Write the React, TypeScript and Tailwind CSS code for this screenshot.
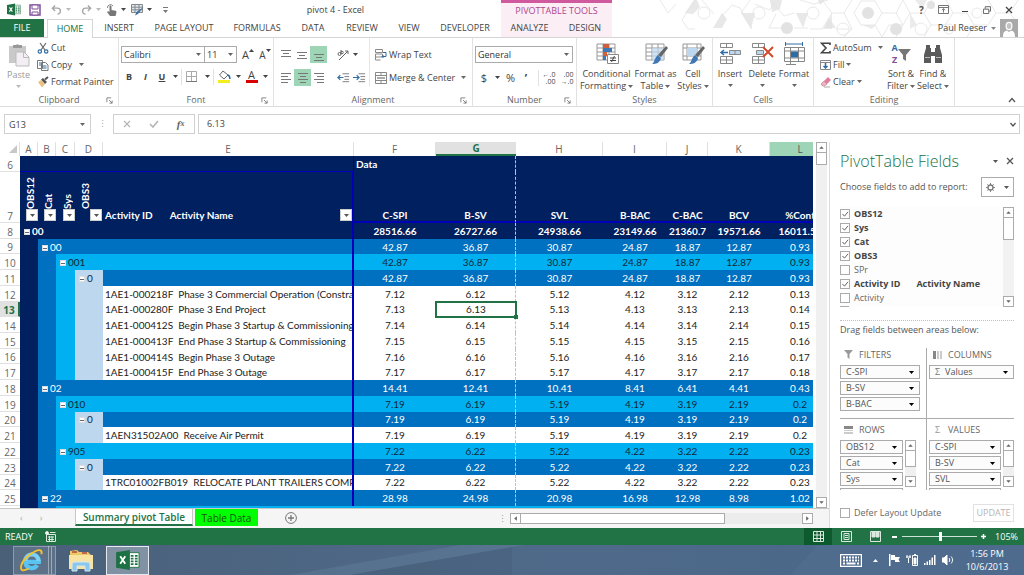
import type { ReactNode } from 'react'
import clsx from 'clsx'

type RowKind = 'total' | 'mid' | 'light' | 'sub' | 'item'

interface SheetRow {
  n: number
  kind: RowKind
  label: string
  values: string[]
}

const row = (n: number, kind: RowKind, label: string, values: string): SheetRow => ({
  n,
  kind,
  label,
  values: values.split(' '),
})

const rows: SheetRow[] = [
  row(8, 'total', '00', '28516.66 26727.66 24938.66 23149.66 21360.7 19571.66 16011.54'),
  row(9, 'mid', '00', '42.87 36.87 30.87 24.87 18.87 12.87 0.93'),
  row(10, 'light', '001', '42.87 36.87 30.87 24.87 18.87 12.87 0.93'),
  row(11, 'sub', '0', '42.87 36.87 30.87 24.87 18.87 12.87 0.93'),
  row(12, 'item', '1AE1-000218F  Phase 3 Commercial Operation (Constraint)', '7.12 6.12 5.12 4.12 3.12 2.12 0.13'),
  row(13, 'item', '1AE1-000280F  Phase 3 End Project', '7.13 6.13 5.13 4.13 3.13 2.13 0.14'),
  row(14, 'item', '1AE1-000412S  Begin Phase 3 Startup & Commissioning', '7.14 6.14 5.14 4.14 3.14 2.14 0.15'),
  row(15, 'item', '1AE1-000413F  End Phase 3 Startup & Commissioning', '7.15 6.15 5.15 4.15 3.15 2.15 0.16'),
  row(16, 'item', '1AE1-000414S  Begin Phase 3 Outage', '7.16 6.16 5.16 4.16 3.16 2.16 0.17'),
  row(17, 'item', '1AE1-000415F  End Phase 3 Outage', '7.17 6.17 5.17 4.17 3.17 2.17 0.18'),
  row(18, 'mid', '02', '14.41 12.41 10.41 8.41 6.41 4.41 0.43'),
  row(19, 'light', '010', '7.19 6.19 5.19 4.19 3.19 2.19 0.2'),
  row(20, 'sub', '0', '7.19 6.19 5.19 4.19 3.19 2.19 0.2'),
  row(21, 'item', '1AEN31502A00  Receive Air Permit', '7.19 6.19 5.19 4.19 3.19 2.19 0.2'),
  row(22, 'light', '905', '7.22 6.22 5.22 4.22 3.22 2.22 0.23'),
  row(23, 'sub', '0', '7.22 6.22 5.22 4.22 3.22 2.22 0.23'),
  row(24, 'item', '1TRC01002FB019  RELOCATE PLANT TRAILERS COMPLETE', '7.22 6.22 5.22 4.22 3.22 2.22 0.23'),
  row(25, 'mid', '22', '28.98 24.98 20.98 16.98 12.98 8.98 1.02'),
]

const kindDepth: Record<RowKind, number> = { total: 0, mid: 1, light: 2, sub: 3, item: 4 }

const kindFill: Record<RowKind, string> = {
  total: 'bg-[#002060] text-white font-bold',
  mid: 'bg-[#0070c0] text-white',
  light: 'bg-[#00b0f0] text-[#10283c]',
  sub: 'bg-[#0070c0] text-white',
  item: 'bg-white text-[#222]',
}

const levelFill = ['bg-[#002060]', 'bg-[#0070c0]', 'bg-[#00b0f0]', 'bg-[#bdd7ee]']

const valueHeads = ['C-SPI', 'B-SV', 'SVL', 'B-BAC', 'C-BAC', 'BCV', '%Cont']

const fields = [
  { name: 'OBS12', on: true },
  { name: 'Sys', on: true },
  { name: 'Cat', on: true },
  { name: 'OBS3', on: true },
  { name: 'SPr', on: false },
  { name: 'Activity ID', extra: 'Activity Name', on: true },
  { name: 'Activity', on: false },
]

/* Small shared pieces */

function Caret({ className = '' }: { className?: string }) {
  return (
    <svg viewBox="0 0 5 3" className={clsx('h-[3px] w-[5px] shrink-0', className)} aria-hidden="true">
      <path d="M0 0h5L2.500 3z" fill="currentColor" />
    </svg>
  )
}

function IconButton({ label, className, children }: { label: string; className?: string; children: ReactNode }) {
  return (
    <button type="button" aria-label={label} className={clsx('flex h-[17px] shrink-0 items-center justify-center', className)}>
      {children}
    </button>
  )
}

function Divider() {
  return <div className="h-4 w-px shrink-0 bg-[#e1e1e1]" />
}

function Group({ label, launcher, className, children }: { label: string; launcher?: boolean; className: string; children: ReactNode }) {
  return (
    <section className={clsx('flex shrink-0 flex-col border-r border-[#e1e1e1]', className)}>
      <div className="h-[57px]">{children}</div>
      <div className="flex h-3 items-center">
        <span className="flex-1 text-center leading-3 text-[#666]">{label}</span>
        {launcher && (
          <button type="button" aria-label={`${label} settings`} className="-ml-3 mr-1 w-2">
            <svg viewBox="0 0 8 8" className="size-[7px]" fill="none" stroke="#777">
              <path d="M1 6V1h5M3.500 3.500L7 7M7 4v3H4" />
            </svg>
          </button>
        )}
      </div>
    </section>
  )
}

function BigButton({ label, lines, caretBelow, className, children }: { label: string; lines: string[]; caretBelow?: boolean; className: string; children: ReactNode }) {
  return (
    <button type="button" aria-label={label} className={clsx('flex shrink-0 flex-col items-center pt-1', className)}>
      <span className="mb-[2px] flex h-6 items-center">{children}</span>
      {lines.map((line, i) => (
        <span key={line} className="flex items-center gap-[2px] whitespace-nowrap leading-3">
          {line}
          {!caretBelow && i === lines.length - 1 && <Caret className="text-[#666]" />}
        </span>
      ))}
      {caretBelow && <Caret className="mt-1 text-[#666]" />}
    </button>
  )
}

function Lines({ rows: r, x = [2, 2, 2, 2] }: { rows: number[]; x?: number[] }) {
  return (
    <svg viewBox="0 0 14 14" className="size-[14px]" stroke="#777" fill="none" aria-hidden="true">
      {r.map((y, i) => (
        <path key={y} d={`M${x[i] < 0 ? 2 : x[i]} ${y + 0.5}H${x[i] < 0 ? 9 : x[i] === 4 ? 10 : 12}`} />
      ))}
    </svg>
  )
}

function Select({ label, value, className }: { label: string; value: string; className: string }) {
  return (
    <div className={clsx('relative h-[17px] border border-[#ababab]', className)}>
      <select aria-label={label} className="block size-full appearance-none bg-white pl-[2px] text-[#333] outline-none">
        <option>{value}</option>
      </select>
      <Caret className="pointer-events-none absolute right-[3px] top-[6px] text-[#666]" />
    </div>
  )
}

function ScrollButton({ dir }: { dir: 'up' | 'down' | 'left' | 'right' }) {
  const d = {
    up: 'M2.500 6.500h5L5 3.500z',
    down: 'M2.500 3.500h5L5 6.500z',
    left: 'M6.500 2.500v5L3.500 5z',
    right: 'M3.500 2.500v5L6.500 5z',
  }[dir]
  return (
    <button type="button" aria-label={`Scroll ${dir}`} className="size-[11px] shrink-0 border border-[#ababab] bg-white">
      <svg viewBox="0 0 10 10" className="size-full">
        <path d={d} fill="#666" />
      </svg>
    </button>
  )
}

function CheckField({ name, extra, on }: { name: string; extra?: string; on?: boolean }) {
  return (
    <label className={clsx('flex h-[14px] items-center gap-[4px]', on ? 'font-bold text-[#444]' : 'text-[#666]')}>
      <span className="grid size-[10px]">
        <input type="checkbox" defaultChecked={on} className="peer col-start-1 row-start-1 size-[10px] appearance-none border border-[#ababab] bg-white" />
        <svg viewBox="0 0 10 10" className="pointer-events-none invisible col-start-1 row-start-1 size-[10px] peer-checked:visible" fill="none" stroke="#666">
          <path d="M2.500 5l2 2.200L8 2.800" />
        </svg>
      </span>
      <span>{name}</span>
      {extra && <span className="ml-3">{extra}</span>}
    </label>
  )
}

/* Title bar and tabs */

function ExcelMark({ className }: { className: string }) {
  return (
    <svg viewBox="0 0 26 24" className={className} aria-hidden="true">
      <path d="M14 4h11v16H14z" fill="#fff" stroke="#217346" />
      <path d="M16 7.500h3M20.500 7.500h3M16 10.500h3M20.500 10.500h3M16 13.500h3M20.500 13.500h3M16 16.500h3M20.500 16.500h3" stroke="#217346" strokeWidth="2" />
      <path d="M0 3.500L15 1v22L0 20.500z" fill="#1e7145" />
      <path d="M4.500 8l5.500 8M10 8l-5.500 8" stroke="#fff" strokeWidth="2" />
    </svg>
  )
}

function HeaderPattern() {
  return (
    <svg viewBox="640 0 384 37" className="pointer-events-none absolute right-0 top-0 h-[37px] w-[384px]" aria-hidden="true">
      <g fill="none" stroke="#e9e9e9">
        <path d="M660 0l8 13 8-9M695 0l-13 20 6 9h7M702 0l12 14M722 16l10-11 8 3 12 21M741 13l9-13M755 4l14 6 10-10M770 0l14 16 10-3M776 14l-7 14h14M794 28h14M800 0l14 4 14-4" />
        <path d="M822 0l10 13-10 16h-12M832 13h12l8-13M844 13l8 16h-16M854 13l7-12h14l7 12-7 12h-14zM882 13h14l7-13M896 13l7 12-7 12M882 37l7-12h14l7-12M910 13l-7-13M910 13h14l7 12h14M924 13l8-13M931 25l-7 12M852 29l-8 8M875 25l7 12M945 25l8-12h14l7 12-7 12M953 13l-7-13M974 25h14l8-12-8-13M996 13h14l8 12M1010 13l8-13" />
        <circle cx="704" cy="13" r="6" />
        <circle cx="759" cy="13" r="6" />
        <circle cx="813" cy="13" r="6" />
        <circle cx="843" cy="29" r="6" />
        <circle cx="921" cy="29" r="6" />
        <circle cx="949" cy="29" r="5" />
        <circle cx="977" cy="13" r="5" />
      </g>
      <g fill="#e2e2e2">
        <path d="M694 0h3l3 7-7 7-8-1zM722 13l5 6-5 9h-9zM741 13h14l-4 16zM770 0h12l-2 9-8 3zM796 13h12l-5 15zM818 0h7l-5 5zM829 18l7 10h-12z" opacity=".8" />
        <path d="M832 13l-9 16h9zM862 25h14l-4 4zM910 13l7 12-7 4zM915 0h12l-5 9z" opacity=".7" />
        <circle cx="787" cy="28" r="6" />
        <circle cx="868" cy="13" r="6" />
        <circle cx="896" cy="29" r="6" />
        <circle cx="931" cy="5" r="4" />
      </g>
    </svg>
  )
}

function TitleBar() {
  return (
    <div className="relative flex h-[19px] items-stretch">
      <div className="flex w-[501px] items-center">
        <div className="flex w-[170px] shrink-0 items-center text-[#777]">
          <ExcelMark className="ml-[7px] h-[13px] w-[14px]" />
          <IconButton label="Save" className="ml-2 w-3">
            <svg viewBox="0 0 12 12" className="size-3">
              <path d="M1 1h10v10H1z" fill="#fff" stroke="#80519a" strokeWidth="1.500" />
              <path d="M3 1h6v4H3zM3 8h6v3H3z" fill="#fff" stroke="#80519a" />
            </svg>
          </IconButton>
          <IconButton label="Undo" className="ml-[10px] w-5 gap-1">
            <svg viewBox="0 0 12 12" className="size-3" fill="none" stroke="#a6a6a6" strokeWidth="1.500">
              <path d="M4.500 1L1.500 4l3 3M2 4h5a3.200 3.200 0 010 6.500" />
            </svg>
            <Caret className="text-[#bbb]" />
          </IconButton>
          <IconButton label="Redo" className="ml-[10px] w-5 gap-1">
            <svg viewBox="0 0 12 12" className="size-3" fill="none" stroke="#a6a6a6" strokeWidth="1.500">
              <path d="M7.500 1l3 3-3 3M10 4H5a3.200 3.200 0 000 6.500" />
            </svg>
            <Caret className="text-[#bbb]" />
          </IconButton>
          <IconButton label="Touch mode" className="ml-[6px] w-[18px] gap-1">
            <svg viewBox="0 0 11 14" className="h-[14px] w-[11px] shrink-0">
              <path d="M1.500 5a3 3 0 015.500-2" fill="none" stroke="#888" />
              <path d="M3.500 3.500c0-1.500 2-1.500 2 0V7l4 .8c.8.200 1 .700 1 1.500L9.500 13H4L1 9c.700-.900 1.500-.800 2.500 0z" fill="#777" />
            </svg>
            <Caret className="text-[#444]" />
          </IconButton>
          <IconButton label="Table tools" className="ml-[6px] w-5 gap-[3px]">
            <svg viewBox="0 0 13 13" className="size-[13px] shrink-0" fill="none">
              <path d="M.5 1.500h11v8H.5z" fill="#dce9f5" />
              <path d="M.5 1.500h11v8H.5zM.5 4.200h11M.5 6.800h11M4 1.500v8M8 1.500v8" stroke="#888" />
              <path d="M12.500 4L7 11l-3 1.500L5.500 9z" fill="#41719c" />
            </svg>
            <Caret className="text-[#444]" />
          </IconButton>
          <IconButton label="Customize toolbar" className="ml-[10px] w-2 flex-col gap-[2px]">
            <span className="h-px w-[5px] bg-[#777]" />
            <Caret />
          </IconButton>
        </div>
        <div className="flex-1 text-center text-[#444]">pivot 4 - Excel</div>
      </div>
      <div className="flex w-[111px] items-center justify-center border-t-[3px] border-[#cf5b9e] bg-[#fceef5] text-[#b0458c]">PIVOTTABLE TOOLS</div>
      <div className="ml-auto mr-1 flex items-center text-[#555]">
        <IconButton label="Help" className="w-[21px] text-[10px] font-bold">?</IconButton>
        <IconButton label="Ribbon display options" className="w-[22px]">
          <svg viewBox="0 0 11 9" className="h-[9px] w-[11px]" fill="none" stroke="#777">
            <path d="M.5.5h10v8H.5zM.5 2.500h10M5.500 7.500V3.500M4 5.200l1.500-1.500L7 5.200" />
          </svg>
        </IconButton>
        <IconButton label="Minimize" className="w-[22px]">
          <span className="mt-1 h-px w-[6px] bg-[#444]" />
        </IconButton>
        <IconButton label="Restore" className="w-[22px]">
          <svg viewBox="0 0 9 9" className="size-2" fill="none" stroke="#555">
            <path d="M.5 3.500h6v5h-6zM2.500 3V.8h6v5H7" />
          </svg>
        </IconButton>
        <IconButton label="Close" className="w-[22px]">
          <svg viewBox="0 0 8 8" className="size-2" stroke="#444" strokeWidth="1.300">
            <path d="M1 1l6 6M7 1L1 7" />
          </svg>
        </IconButton>
      </div>
    </div>
  )
}

function Tabs() {
  const tab = 'h-full shrink-0 text-center text-[#444]'
  return (
    <nav className="relative flex h-[19px] items-stretch border-b border-[#d5d5d5]">
      <button type="button" className="w-[44px] bg-[#217346] text-white">FILE</button>
      <button type="button" className="-mb-px ml-[3px] w-[46px] border border-b-0 border-[#d5d5d5] bg-white text-[#217346]">HOME</button>
      <button type="button" className={clsx(tab, 'w-[52px]')}>INSERT</button>
      <button type="button" className={clsx(tab, 'w-[78px]')}>PAGE LAYOUT</button>
      <button type="button" className={clsx(tab, 'w-[68px]')}>FORMULAS</button>
      <button type="button" className={clsx(tab, 'w-[44px]')}>DATA</button>
      <button type="button" className={clsx(tab, 'w-[54px]')}>REVIEW</button>
      <button type="button" className={clsx(tab, 'w-[40px]')}>VIEW</button>
      <button type="button" className={clsx(tab, 'w-[72px]')}>DEVELOPER</button>
      <button type="button" className={clsx(tab, 'w-[57px] bg-[#fceef5]')}>ANALYZE</button>
      <button type="button" className={clsx(tab, 'w-[54px] bg-[#fceef5]')}>DESIGN</button>
      <button type="button" className="ml-auto mr-[6px] flex items-center gap-[4px] text-[#444]">
        Paul Reeser
        <Caret className="text-[#888]" />
        <svg viewBox="0 0 18 18" className="size-[18px]" aria-hidden="true">
          <path d="M0 0h18v18H0z" fill="#a9a9a9" />
          <ellipse cx="9" cy="7" rx="3.500" ry="4.200" fill="#fff" />
          <path d="M3 18c0-4 1-6 4-6.500L9 13l2-1.500c3 .5 4 2.500 4 6.500z" fill="#fff" />
          <ellipse cx="9" cy="7" rx="2.300" ry="3" fill="#c4c4c4" />
        </svg>
      </button>
    </nav>
  )
}

/* Ribbon */

function TableIcon({ children }: { children?: ReactNode }) {
  return (
    <svg viewBox="0 0 24 24" className="size-6" fill="none" aria-hidden="true">
      <path d="M2 2h18v16H2z" fill="#fff" stroke="#999" />
      <path d="M2 6h18M2 10h18M2 14h18M8 2v16M14 2v16" stroke="#999" />
      {children}
    </svg>
  )
}

function Ribbon() {
  return (
    <div className="relative flex h-[69px] shrink-0 overflow-hidden border-b border-[#dcdcdc] bg-white text-[#444]">
      <Group label="Clipboard" launcher className="w-[119px]">
        <div className="flex">
          <button type="button" className="flex w-[37px] flex-col items-center pt-[5px] text-[#999]">
            <svg viewBox="0 0 22 24" className="h-6 w-[22px]" aria-hidden="true">
              <path d="M1 3h17v17H1z" fill="#c9c9c9" />
              <path d="M5 5V2h3a2 2 0 013 0h3v3z" fill="#999" />
              <path d="M8 9h8l5 5v9H8z" fill="#f3eef3" stroke="#bbb" />
              <path d="M15.500 9v5.500H21" fill="none" stroke="#bbb" />
            </svg>
            <span className="mt-[2px] leading-3">Paste</span>
            <Caret className="mt-1 text-[#bbb]" />
          </button>
          <div className="flex flex-col pt-[1px]">
            <button type="button" className="flex h-[17px] items-center gap-[2px]">
              <svg viewBox="0 0 12 12" className="size-3" fill="none">
                <path d="M3 1l5 7M9 1L4 8" stroke="#666" strokeWidth="1.200" />
                <circle cx="2.800" cy="9.500" r="1.700" stroke="#2e6da4" strokeWidth="1.200" />
                <circle cx="9.200" cy="9.500" r="1.700" stroke="#2e6da4" strokeWidth="1.200" />
              </svg>
              Cut
            </button>
            <button type="button" className="flex h-[17px] items-center gap-[2px]">
              <svg viewBox="0 0 12 12" className="size-3" fill="#fff" stroke="#777">
                <path d="M.5 1.500h5v8h-5zM4.500 3.500h4l2.500 2.500v5.500H4.500z" />
                <path d="M2 4h2M2 6h2M6 7h3.500M6 9h3.500" stroke="#2e6da4" />
              </svg>
              Copy
              <Caret className="ml-[5px] text-[#666]" />
            </button>
            <button type="button" className="flex h-[17px] items-center gap-[2px] whitespace-nowrap">
              <svg viewBox="0 0 12 12" className="size-3">
                <path d="M1 6l3-2 4 4-3 3.500z" fill="#eac282" />
                <path d="M4 3.500L6 2l4 4-2 2z" fill="#555" />
                <path d="M8 3.500L11 1" stroke="#555" strokeWidth="2" />
              </svg>
              Format Painter
            </button>
          </div>
        </div>
      </Group>

      <Group label="Font" launcher className="w-[155px]">
        <div className="flex pl-[2px] pt-2">
          <Select label="Font" value="Calibri" className="w-[84px]" />
          <Select label="Font size" value="11" className="-ml-px w-[33px]" />
          <IconButton label="Increase font size" className="w-[22px] text-[11px]">
            A<Caret className="-mt-2 rotate-180" />
          </IconButton>
          <IconButton label="Decrease font size" className="w-3 text-[10px]">
            A<Caret className="-mt-2" />
          </IconButton>
        </div>
        <div className="flex items-center pl-[2px] pt-[5px]">
          <IconButton label="Bold" className="w-4 font-bold">B</IconButton>
          <IconButton label="Italic" className="w-[17px] font-bold italic">I</IconButton>
          <IconButton label="Underline" className="w-4 font-bold underline">U</IconButton>
          <IconButton label="Underline styles" className="w-[11px]"><Caret /></IconButton>
          <Divider />
          <IconButton label="Borders" className="w-[19px]">
            <svg viewBox="0 0 11 11" className="size-[11px]" fill="none" stroke="#aaa">
              <path d="M.5.5h10v10H.5zM5.500.5v10M.5 5.500h10" />
              <path d="M0 10.500h11" stroke="#777" />
            </svg>
          </IconButton>
          <IconButton label="Border styles" className="w-3"><Caret /></IconButton>
          <Divider />
          <IconButton label="Fill color" className="w-5">
            <svg viewBox="0 0 13 13" className="size-[13px]">
              <path d="M5 1l5 4-4 4-4.500-4z" fill="#fff" stroke="#666" />
              <path d="M10 5c2 1 2 2 1.800 4" fill="none" stroke="#2e6da4" strokeWidth="1.500" />
              <path d="M0 10h12v3H0z" fill="#f5ee1c" />
            </svg>
          </IconButton>
          <IconButton label="Fill colors" className="w-[8px]"><Caret /></IconButton>
          <IconButton label="Font color" className="w-[19px]">
            <span className="flex w-3 flex-col items-center text-[11px] leading-[10px]">
              A<span className="h-[3px] w-full bg-[#d80000]" />
            </span>
          </IconButton>
          <IconButton label="Font colors" className="w-[8px]"><Caret /></IconButton>
        </div>
      </Group>

      <Group label="Alignment" launcher className="w-[199px]">
        <div className="flex">
          <div className="flex w-[96px] flex-col gap-[6px] border-r border-[#e6e6e6] pl-[4px] pt-2">
            <div className="flex">
              <IconButton label="Top align" className="w-4"><Lines rows={[2, 5, 8]} x={[2, 4, 2]} /></IconButton>
              <IconButton label="Middle align" className="w-4"><Lines rows={[4, 7, 10]} x={[2, 4, 2]} /></IconButton>
              <IconButton label="Bottom align" className="w-[17px] bg-[#9fd5b7]"><Lines rows={[6, 9, 12]} x={[2, 4, 2]} /></IconButton>
              <IconButton label="Orientation" className="ml-2 w-6 gap-1">
                <svg viewBox="0 0 13 12" className="h-3 w-[13px]" fill="none" stroke="#666">
                  <path d="M3 11L12 2M12 2v3M12 2H9" />
                  <circle cx="3.500" cy="5" r="1.500" />
                  <path d="M5 1v4" />
                  <circle cx="6" cy="3.500" r="1.300" />
                </svg>
                <Caret />
              </IconButton>
            </div>
            <div className="flex">
              <IconButton label="Align left" className="w-4"><Lines rows={[2, 5, 8, 11]} x={[2, -1, 2, -1]} /></IconButton>
              <IconButton label="Center" className="w-[17px] bg-[#9fd5b7]"><Lines rows={[2, 5, 8, 11]} x={[2, 4, 2, 4]} /></IconButton>
              <IconButton label="Align right" className="w-4"><Lines rows={[2, 5, 8, 11]} x={[2, 5, 2, 5]} /></IconButton>
              <IconButton label="Decrease indent" className="ml-2 w-4">
                <svg viewBox="0 0 14 11" className="h-[11px] w-[13px]" fill="none">
                  <path d="M6 1.500h7M8 4.500h5M8 7.500h5M6 10h7" stroke="#777" />
                  <path d="M7 5.500H1M3.500 3L1 5.500 3.500 8" stroke="#2e6da4" strokeWidth="1.300" />
                </svg>
              </IconButton>
              <IconButton label="Increase indent" className="w-4">
                <svg viewBox="0 0 14 11" className="h-[11px] w-[13px]" fill="none">
                  <path d="M6 1.500h7M8 4.500h5M8 7.500h5M6 10h7" stroke="#777" />
                  <path d="M0 5.500h6M4 3l2.500 2.500L4 8" stroke="#2e6da4" strokeWidth="1.300" />
                </svg>
              </IconButton>
            </div>
          </div>
          <div className="flex flex-col gap-[6px] pl-[5px] pt-2">
            <button type="button" className="flex h-[17px] items-center gap-[2px]">
              <svg viewBox="0 0 12 12" className="size-3" fill="none" stroke="#888">
                <path d="M.5.5h7v3h-7zM.5 5h7v3h-7zM.5 8v3h5" />
                <path d="M8 3.500h3v4H7M8.500 6L7 7.500 8.500 9" stroke="#2e6da4" />
              </svg>
              Wrap Text
            </button>
            <button type="button" className="flex h-[17px] items-center gap-[2px] whitespace-nowrap">
              <svg viewBox="0 0 12 12" className="size-3" fill="none" stroke="#888">
                <path d="M.5.5h11v11H.5zM.5 3.500h11M.5 8.500h11M6 .5v3M6 8.500v3" />
                <path d="M2 6h8" stroke="#555" />
              </svg>
              Merge &amp; Center
              <Caret className="ml-1 text-[#666]" />
            </button>
          </div>
        </div>
      </Group>

      <Group label="Number" launcher className="w-[104px]">
        <div className="pl-[2px] pt-2">
          <Select label="Number format" value="General" className="w-[98px]" />
        </div>
        <div className="flex items-center pl-[2px] pt-[6px] text-[11px]">
          <IconButton label="Currency" className="w-[18px]">$</IconButton>
          <IconButton label="Currency formats" className="w-2"><Caret /></IconButton>
          <IconButton label="Percent" className="w-[19px]">%</IconButton>
          <IconButton label="Comma style" className="w-3 font-bold">&rsquo;</IconButton>
          <div className="w-[6px]" />
          <Divider />
          <IconButton label="Increase decimal" className="w-5">
            <span className="flex flex-col items-end text-[7px] leading-[7px]"><span>←.0</span><span>.00</span></span>
          </IconButton>
          <IconButton label="Decrease decimal" className="w-4">
            <span className="flex flex-col items-end text-[7px] leading-[7px]"><span>.00</span><span>→.0</span></span>
          </IconButton>
        </div>
      </Group>

      <Group label="Styles" className="w-[136px]">
        <div className="flex">
          <BigButton label="Conditional Formatting" lines={['Conditional', 'Formatting']} className="w-[59px]">
            <TableIcon>
              <path d="M8 2h6v4H8zM8 10h4v4H8z" fill="#d0603c" />
              <path d="M8 6h9v4H8zM8 14h3v4H8z" fill="#3f78b5" />
              <path d="M12.500 12.500h11v9h-11z" fill="#fff" stroke="#888" />
              <path d="M15 16h6M15 18.500h6M19.500 14l-3 6" stroke="#444" />
            </TableIcon>
          </BigButton>
          <BigButton label="Format as Table" lines={['Format as', 'Table']} className="w-[39px]">
            <TableIcon>
              <path d="M8 6h12v12H8z" fill="#bdd7ee" opacity=".7" />
              <path d="M24 6l-7 9-3-2 8-9z" fill="#666" />
              <path d="M14 13l3 3c-1 5-5 6-9 6 3-2 2-6 6-9z" fill="#3f78b5" />
            </TableIcon>
          </BigButton>
          <BigButton label="Cell Styles" lines={['Cell', 'Styles']} className="w-[36px]">
            <svg viewBox="0 0 24 24" className="size-6" fill="none">
              <path d="M2 2h18v16H2zM2 6h18M2 14h18M6 2v16M16 2v16" stroke="#999" />
              <path d="M6 6h10v8H6z" fill="#bdd7ee" />
              <path d="M24 6l-7 9-3-2 8-9z" fill="#666" />
              <path d="M14 13l3 3c-1 5-5 6-9 6 3-2 2-6 6-9z" fill="#3f78b5" />
            </svg>
          </BigButton>
        </div>
      </Group>

      <Group label="Cells" className="w-[101px]">
        <div className="flex pl-px">
          <BigButton label="Insert" lines={['Insert']} caretBelow className="w-8">
            <svg viewBox="0 0 24 24" className="size-6" fill="none" stroke="#888">
              <path d="M2.500 1.500h12v4h-12zM8.500 1.500v4M2.500 14.500h12v7h-12zM2.500 18h12M8.500 14.500v7" />
              <path d="M11.500 8.500h11v4h-11z" fill="#bdd7ee" />
              <path d="M17 8.500v4" />
              <path d="M10 10.500H3M6 8l-3 2.500L6 13" stroke="#2e6da4" strokeWidth="1.500" />
            </svg>
          </BigButton>
          <BigButton label="Delete" lines={['Delete']} caretBelow className="w-8">
            <svg viewBox="0 0 24 24" className="size-6" fill="none" stroke="#888">
              <path d="M2.500 1.500h12v4h-12zM8.500 1.500v4M2.500 14.500h12v7h-12zM2.500 18h12M8.500 14.500v7" />
              <path d="M6.500 8.500h7v4h-7z" fill="#bdd7ee" />
              <path d="M13 5l10 10M23 5L13 15" stroke="#d2492a" strokeWidth="2" />
            </svg>
          </BigButton>
          <BigButton label="Format" lines={['Format']} caretBelow className="w-8">
            <svg viewBox="0 0 24 24" className="size-6" fill="none" stroke="#888">
              <path d="M2.500 5.500h20v14h-20zM2.500 9h20M2.500 16h20M8.500 5.500v17M16.500 5.500v14M4 22.500h10" />
              <path d="M9 9.500h7v6H9z" fill="#2e6da4" stroke="none" />
              <path d="M3.500 2h17M3.500 0v4M20.500 0v4" stroke="#2e6da4" />
            </svg>
          </BigButton>
        </div>
      </Group>

      <Group label="Editing" className="w-[141px]">
        <div className="flex">
          <div className="flex w-[71px] shrink-0 flex-col pl-[6px] pt-[1px]">
            <button type="button" className="flex h-[17px] items-center gap-[2px] whitespace-nowrap">
              <svg viewBox="0 0 11 12" className="h-3 w-[11px] shrink-0" fill="none" stroke="#444" strokeWidth="1.600">
                <path d="M10 3V1.200H1.500L6 6l-4.500 4.800H10V9" />
              </svg>
              AutoSum
              <Caret className="ml-1 text-[#666]" />
            </button>
            <button type="button" className="flex h-[17px] items-center gap-[2px]">
              <svg viewBox="0 0 11 12" className="h-3 w-[11px]" fill="none">
                <path d="M.5 1.500h10v9H.5zM.5 3.500h10" stroke="#888" />
                <path d="M5.500 4v5M3.500 7l2 2 2-2" stroke="#2e6da4" strokeWidth="1.500" />
              </svg>
              Fill
              <Caret className="text-[#666]" />
            </button>
            <button type="button" className="flex h-[17px] items-center gap-[2px]">
              <svg viewBox="0 0 11 12" className="h-3 w-[11px]">
                <path d="M4 5l4-4 3 3-4 4z" fill="#e07f9c" />
                <path d="M4 5l3 3-2.500 2H2.500L1 8z" fill="#eeb4c5" stroke="#c56a86" strokeWidth=".6" />
                <path d="M4 11h6" stroke="#aaa" />
              </svg>
              Clear
              <Caret className="text-[#666]" />
            </button>
          </div>
          <BigButton label="Sort and filter" lines={['Sort &', 'Filter']} className="w-8">
            <span className="flex items-center">
              <span className="flex flex-col text-[9px] leading-3">
                <span className="font-bold text-[#2e6da4]">A</span>
                <span className="font-bold text-[#8450a0]">Z</span>
              </span>
              <svg viewBox="0 0 13 13" className="size-[13px]">
                <path d="M0 1h13L8 7v6l-3-2V7z" fill="#777" />
              </svg>
            </span>
          </BigButton>
          <BigButton label="Find and select" lines={['Find &', 'Select']} className="w-8">
            <svg viewBox="0 0 20 20" className="size-5" fill="#5a5a5a">
              <path d="M3 1h4v3h1v4h4V4h1V1h4v3l2 7v8h-7v-7H8v7H1v-8l2-7z" />
              <path d="M2 13.500h5M13 13.500h5" stroke="#bbb" />
            </svg>
          </BigButton>
        </div>
      </Group>

      <button type="button" aria-label="Collapse ribbon" className="mb-[3px] ml-auto mr-2 self-end">
        <svg viewBox="0 0 8 6" className="h-[6px] w-2" fill="none" stroke="#555" strokeWidth="1.300">
          <path d="M1 5l3-3.500L7 5" />
        </svg>
      </button>
    </div>
  )
}

function FormulaBar() {
  return (
    <div className="flex h-[35px] shrink-0 items-start px-1 pt-[7px] text-[#444]">
      <div className="relative h-5 w-[87px] border border-[#d0d0d0]">
        <input aria-label="Name box" defaultValue="G13" className="size-full bg-white pl-1 outline-none" />
        <Caret className="absolute right-[5px] top-2 text-[#666]" />
      </div>
      <div className="flex h-5 w-[22px] items-center justify-center text-[#aaa]">⋮</div>
      <div className="mr-[3px] flex h-5 w-[82px] items-center justify-around border border-[#d0d0d0]">
        <IconButton label="Cancel" className="w-5">
          <svg viewBox="0 0 8 8" className="size-2" stroke="#b5b5b5" strokeWidth="1.200"><path d="M1 1l6 6M7 1L1 7" /></svg>
        </IconButton>
        <IconButton label="Enter" className="w-5">
          <svg viewBox="0 0 10 8" className="h-2 w-[10px]" fill="none" stroke="#b5b5b5" strokeWidth="1.600"><path d="M1 4l3 3 5-6" /></svg>
        </IconButton>
        <IconButton label="Insert function" className="w-5 font-['Liberation_Serif',serif] text-[11px] font-bold italic text-[#666]">
          f<span className="text-[8px]">x</span>
        </IconButton>
      </div>
      <div className="flex h-5 flex-1 items-center border border-[#d0d0d0]">
        <input aria-label="Formula" defaultValue="6.13" className="flex-1 bg-white pl-2 outline-none" />
        <button type="button" aria-label="Expand formula bar" className="mr-[3px]">
          <svg viewBox="0 0 6 5" className="h-[5px] w-[6px]" fill="none" stroke="#555" strokeWidth="1.300"><path d="M.5 1L3 4l2.500-3" /></svg>
        </button>
      </div>
    </div>
  )
}

/* Worksheet */

function FilterButton() {
  return (
    <button type="button" aria-label="Filter" className="flex size-3 items-center justify-center border border-[#ccc] bg-white">
      <Caret className="text-[#555]" />
    </button>
  )
}

function Collapse({ label }: { label: string }) {
  return (
    <span className="whitespace-nowrap">
      <button type="button" aria-label={`Collapse ${label}`} className="ml-[4px] mr-[2px] inline-block size-[6px] border border-[#ddd] bg-white align-[1px]">
        <span className="mt-[1px] block h-px bg-[#667]" />
      </button>
      {label}
    </span>
  )
}

function SideLabel({ text }: { text: string }) {
  return (
    <div className="flex h-full flex-col items-end justify-end">
      <span className="mr-[2px] h-[30px] rotate-180 whitespace-nowrap leading-[12px] [writing-mode:vertical-rl]">{text}</span>
      <FilterButton />
    </div>
  )
}

function valueBorder(i: number) {
  return i === 1 ? 'border-r border-dashed border-[#b8c4d4]' : ''
}

function RowHead({ n, active }: { n: number; active?: boolean }) {
  return (
    <th
      scope="row"
      className={clsx(
        "border-b border-[#e0e0e0] text-center align-bottom font-['Open_Sans',sans-serif]",
        active ? 'border-r-2 border-r-[#217346] bg-[#e1e1e1] font-bold text-[#217346]' : 'bg-white font-normal text-[#666]',
      )}
    >
      {n}
    </th>
  )
}

function Sheet() {
  const head = 'border-r border-[#e0e0e0] text-center font-normal text-[#666]'
  return (
    <div className="min-w-0 flex-1 overflow-hidden">
      <table className="h-full w-[830px] table-fixed border-separate border-spacing-0 text-[10px] leading-3 [&_td]:p-0 [&_th]:p-0">
        <colgroup>
          <col className="w-5" />
          <col className="w-[18px]" />
          <col className="w-[18px]" />
          <col className="w-[19px]" />
          <col className="w-[28px]" />
          <col className="w-[251px]" />
          <col className="w-[82px]" />
          <col className="w-[80px]" />
          <col className="w-[87px]" />
          <col className="w-[64px]" />
          <col className="w-[41px]" />
          <col className="w-[62px]" />
          <col className="w-[60px]" />
        </colgroup>
        <thead>
          <tr className="h-[14px] text-[10px]">
            <th className={head}>
              <svg viewBox="0 0 8 8" className="ml-auto mr-[2px] size-2"><path d="M8 0v8H0z" fill="#c8c8c8" /></svg>
            </th>
            {['A', 'B', 'C', 'D', 'E', 'F'].map((c) => (
              <th key={c} scope="col" className={head}>{c}</th>
            ))}
            <th scope="col" className="border-b-2 border-[#217346] bg-[#e1e1e1] text-center leading-[10px] text-[#217346]">G</th>
            {['H', 'I', 'J', 'K'].map((c) => (
              <th key={c} scope="col" className={head}>{c}</th>
            ))}
            <th scope="col" className="bg-[#9fd5b7] font-normal text-[#555]">L</th>
          </tr>
        </thead>
        <tbody className="font-[Lato,sans-serif]">
          <tr className="h-4 bg-[#002060] font-bold text-white">
            <RowHead n={6} />
            <td colSpan={5} className="border-b border-r border-b-[#0000c0] border-r-[#0000a0]" />
            <td className="pl-[2px]!">Data</td>
            <td className={valueBorder(1)} />
            <td colSpan={5} />
          </tr>
          <tr className="h-[51px] bg-[#002060] align-bottom font-bold text-white">
            <RowHead n={7} />
            <td className="pb-[2px]!"><SideLabel text="OBS12" /></td>
            <td className="pb-[2px]!"><SideLabel text="Cat" /></td>
            <td className="pb-[2px]!"><SideLabel text="Sys" /></td>
            <td className="pb-[2px]!">
              <div className="flex h-full items-end">
                <span className="mb-3 ml-1 h-[30px] rotate-180 leading-[12px] [writing-mode:vertical-rl]">OBS3</span>
                <span className="-ml-px"><FilterButton /></span>
              </div>
            </td>
            <td className="border-r-2 border-[#0000b8] pb-[2px]! pl-[2px]!">
              <div className="flex items-center">
                <span>Activity ID</span>
                <span className="ml-[17px] flex-1">Activity Name</span>
                <FilterButton />
              </div>
            </td>
            {valueHeads.map((h, i) => (
              <td key={h} className={clsx('border-b-2 border-b-[#0000b8] text-center', i === 1 && 'border-r border-r-[#b8c4d4] [border-right-style:dashed]')}>
                {h}
              </td>
            ))}
          </tr>
          {rows.map((r) => {
            const depth = kindDepth[r.kind]
            return (
              <tr key={r.n} className={kindFill[r.kind]}>
                <RowHead n={r.n} active={r.n === 13} />
                {levelFill.slice(0, depth).map((fill) => (
                  <td key={fill} className={fill} />
                ))}
                {r.kind === 'item' ? (
                  <td className="overflow-hidden whitespace-pre border-r-2 border-[#0000b8] pl-[2px]!">{r.label}</td>
                ) : r.kind === 'sub' ? (
                  <>
                    <td className="bg-[#bdd7ee] text-[#10283c]"><Collapse label={r.label} /></td>
                    <td className="border-r-2 border-[#0000b8]" />
                  </>
                ) : (
                  <td colSpan={5 - depth} className="border-r-2 border-[#0000b8]"><Collapse label={r.label} /></td>
                )}
                {r.values.map((v, i) =>
                  r.n === 13 && i === 1 ? (
                    <td key={i} className="relative text-center">
                      {v}
                      <div className="pointer-events-none absolute -inset-px border-2 border-[#217346]">
                        <span className="absolute -bottom-[3px] -right-[3px] size-1 bg-[#217346]" />
                      </div>
                    </td>
                  ) : (
                    <td key={i} className={clsx('text-center', valueBorder(i))}>{v}</td>
                  ),
                )}
              </tr>
            )
          })}
          {/* Top edge of the next row */}
          <tr className="h-[2px] bg-[#00b0f0]">
            <td className="bg-white" />
            <td className="bg-[#002060]" />
            <td className="bg-[#0070c0]" />
            <td colSpan={10} />
          </tr>
        </tbody>
      </table>
    </div>
  )
}

function SheetTabs() {
  return (
    <div className="flex h-5 shrink-0 items-start border-t border-[#c8c8c8] bg-[#f5f5f5]">
      <div className="flex h-[18px] w-[75px] items-center gap-[17px] pl-5 text-[#aaa]">
        <button type="button" aria-label="Previous sheet">‹</button>
        <button type="button" aria-label="Next sheet">›</button>
      </div>
      <button type="button" className="h-[17px] w-[118px] border-x border-b-2 border-x-[#c8c8c8] border-b-[#217346] bg-white text-[10px] font-semibold text-[#217346]">
        Summary pivot Table
      </button>
      <button type="button" className="ml-[2px] h-[17px] w-[63px] bg-[#00ff00] text-[10px] text-[#1a4d1a]">Table Data</button>
      <button type="button" aria-label="New sheet" className="ml-[27px] mt-[3px]">
        <svg viewBox="0 0 12 12" className="size-3" fill="none" stroke="#777">
          <circle cx="6" cy="6" r="5.400" />
          <path d="M6 3v6M3 6h6" strokeWidth="1.300" />
        </svg>
      </button>
      <div className="ml-auto flex w-[331px] shrink-0 items-center pt-[4px]">
        <span className="w-3 leading-[11px] text-[#999]">⋮</span>
        <ScrollButton dir="left" />
        <div className="flex flex-1 bg-[#ececec]">
          <div className="h-[11px] w-[204px] border border-l-0 border-[#ababab] bg-white" />
        </div>
        <ScrollButton dir="right" />
        <div className="w-4" />
      </div>
    </div>
  )
}

/* Field list pane */

function FieldChip({ name, sigma }: { name: string; sigma?: boolean }) {
  return (
    <button type="button" className="flex h-[14px] w-full shrink-0 items-center border border-[#ababab] bg-[#fcfcfc] px-[5px] text-[#555]">
      {sigma && <span className="mr-[5px] text-[#777]">Σ</span>}
      <span className="flex-1 text-left">{name}</span>
      <Caret className="text-black" />
    </button>
  )
}

function Area({ title, icon, chips, sigma, scroll, className }: { title: string; icon: ReactNode; chips: string[]; sigma?: boolean; scroll?: boolean; className: string }) {
  return (
    <div className={clsx('h-[71px] overflow-hidden', className)}>
      <div className="mb-[4px] flex h-[13px] items-center gap-[6px] pl-1 text-[#666]">
        <span className="flex w-[9px] justify-center text-[#999]">{icon}</span>
        {title}
      </div>
      <div className="flex gap-[2px]">
        <div className="flex flex-1 flex-col gap-[2px]">
          {chips.map((c) => (
            <FieldChip key={c} name={c} sigma={sigma} />
          ))}
          {scroll && <div className="h-1 border border-b-0 border-[#ababab]" />}
        </div>
        {scroll && (
          <div className="flex h-[47px] w-[11px] flex-col bg-[#f0f0f0]">
            <ScrollButton dir="up" />
            <div className="h-4 w-[11px] border border-t-0 border-[#ababab] bg-white" />
            <div className="flex-1" />
            <ScrollButton dir="down" />
          </div>
        )}
      </div>
    </div>
  )
}

function FieldsPane() {
  return (
    <aside className="flex w-[195px] shrink-0 flex-col border-l border-[#dcdcdc] pl-[10px] pr-[10px] text-[#555]">
      <div className="flex items-center pt-[7px]">
        <h2 className="flex-1 text-[16px] font-light leading-6 text-[#217346]">PivotTable Fields</h2>
        <button type="button" aria-label="Pane options" className="mr-2"><Caret /></button>
        <button type="button" aria-label="Close pane">
          <svg viewBox="0 0 8 8" className="size-2" stroke="#555" strokeWidth="1.300"><path d="M1 1l6 6M7 1L1 7" /></svg>
        </button>
      </div>
      <div className="mt-1 flex h-5 items-center justify-between">
        <span className="whitespace-nowrap">Choose fields to add to report:</span>
        <button type="button" aria-label="Field list layout" className="flex h-5 w-[33px] items-center justify-center gap-[9px] border border-[#ababab]">
          <svg viewBox="0 0 10 10" className="size-[9px]" fill="none" stroke="#777">
            <circle cx="5" cy="5" r="2.800" strokeWidth="1.500" />
            <path d="M5 0v2M5 8v2M0 5h2M8 5h2M1.500 1.500l1.300 1.300M7.200 7.200l1.300 1.300M8.500 1.500L7.200 2.800M2.800 7.200L1.500 8.500" />
          </svg>
          <Caret />
        </button>
      </div>
      <div className="mt-[10px] flex h-[100px] bg-[#fdfdfd]">
        <div className="flex-1 overflow-hidden">
          {fields.map((f) => (
            <CheckField key={f.name} {...f} />
          ))}
          <div className="mt-[1px] h-px w-[9px] bg-[#ababab]" />
        </div>
        <div className="flex w-[11px] flex-col bg-[#f2f2f2]">
          <ScrollButton dir="up" />
          <div className="h-[22px] border border-t-0 border-[#ababab] bg-white" />
          <div className="flex-1" />
          <ScrollButton dir="down" />
        </div>
      </div>
      <div className="mt-[13px] border-t border-dotted border-[#c0c0c0] pt-[3px] leading-[12px]">Drag fields between areas below:</div>
      <div className="mt-3 grid grid-cols-2">
        <Area
          title="FILTERS"
          className="border-b border-r border-[#ababab] pr-[6px]"
          chips={['C-SPI', 'B-SV', 'B-BAC']}
          icon={<svg viewBox="0 0 9 9" className="size-[9px]"><path d="M0 0h9L5.500 4v5l-2-1.500V4z" fill="#999" /></svg>}
        />
        <Area
          title="COLUMNS"
          className="border-b border-[#ababab] pl-[2px]"
          chips={['Values']}
          sigma
          icon={<svg viewBox="0 0 9 8" className="h-2 w-[9px]"><path d="M0 0h3v8H0z" fill="#888" /><path d="M4 0h2v8H4zM7 0h2v8H7z" fill="#ccc" /></svg>}
        />
        <Area
          title="ROWS"
          className="border-r border-[#ababab] pr-[10px] pt-1"
          chips={['OBS12', 'Cat', 'Sys']}
          scroll
          icon={<svg viewBox="0 0 9 8" className="h-2 w-[9px]"><path d="M0 0h9v3H0z" fill="#888" /><path d="M0 4h9v1H0zM0 6h9v2H0z" fill="#ccc" /></svg>}
        />
        <Area title="VALUES" className="pl-[2px] pt-1" chips={['C-SPI', 'B-SV', 'SVL']} scroll icon={<span>Σ</span>} />
      </div>
      <div className="mb-[6px] mt-auto flex h-[18px] items-center justify-between">
        <CheckField name="Defer Layout Update" />
        <button type="button" disabled className="h-[18px] w-[41px] border border-[#e1e1e1] text-[#b5b5b5]">UPDATE</button>
      </div>
    </aside>
  )
}

/* Bottom bars */

function StatusBar() {
  return (
    <footer className="flex h-[17px] shrink-0 items-center bg-[#217346] text-white">
      <span className="w-[45px] pl-[5px]">READY</span>
      <svg viewBox="0 0 11 11" className="size-[11px]" fill="none" stroke="#dbe9df">
        <path d="M1.500 3.500h9v7h-9zM3 6h6M3 8.500h6M4.500 5v5M7 5v5M5 1.500h5.500" />
        <circle cx="2" cy="2" r="1.500" fill="#fff" />
      </svg>
      <div className="ml-auto flex h-full items-center">
        <IconButton label="Normal view" className="w-7 bg-[#0c5a2e]">
          <svg viewBox="0 0 11 11" className="size-[11px]" fill="none" stroke="#dbe9df"><path d="M.5.5h10v10H.5zM.5 4h10M.5 7.500h10M4 .5v10M7.500.5v10" /></svg>
        </IconButton>
        <IconButton label="Page layout view" className="w-7">
          <svg viewBox="0 0 11 11" className="size-[11px]" fill="none" stroke="#dbe9df"><path d="M.5.5h10v10H.5zM3 2.500h5v6H3zM4 4.500h3M4 6.500h3" /></svg>
        </IconButton>
        <IconButton label="Page break view" className="w-[30px]">
          <svg viewBox="0 0 11 11" className="size-[11px]" fill="none" stroke="#dbe9df"><path d="M.5.5h10v10H.5z" /><path d="M2 1h3v5H2zM6 1h3v5H6z" fill="#dbe9df" /></svg>
        </IconButton>
        <button type="button" aria-label="Zoom out" className="ml-[2px] mr-[5px] h-[2px] w-[5px] bg-white" />
        <input
          type="range"
          aria-label="Zoom"
          defaultValue={51}
          className="h-px w-[75px] appearance-none bg-[#cfe2d6] [&::-webkit-slider-thumb]:h-[9px] [&::-webkit-slider-thumb]:w-[3px] [&::-webkit-slider-thumb]:appearance-none [&::-webkit-slider-thumb]:bg-white"
        />
        <button type="button" aria-label="Zoom in" className="ml-[3px] w-[7px]">
          <svg viewBox="0 0 7 7" className="size-[7px]" stroke="#fff" strokeWidth="1.500"><path d="M3.500 1v5M1 3.500h5" /></svg>
        </button>
        <span className="w-[37px] pr-[6px] text-right">105%</span>
      </div>
    </footer>
  )
}

function Taskbar() {
  return (
    <div className="relative flex h-[30px] shrink-0 items-center bg-linear-to-r from-[#4a6079] via-[#4f6a89] to-[#4a678a] text-white">
      <svg viewBox="0 0 1024 30" preserveAspectRatio="none" className="pointer-events-none absolute inset-0 size-full" aria-hidden="true">
        <path d="M290 30L460 0h64L350 30z" fill="#6d8aa6" opacity=".3" />
        <path d="M350 30L512 2v28z" fill="#3d536c" opacity=".25" />
        <path d="M790 30l28-30h206v30z" fill="#5d7d9f" opacity=".2" />
      </svg>
      <button type="button" aria-label="Internet Explorer" className="relative ml-[13px] flex h-[29px] w-[43px] items-center border border-white/30 bg-white/10">
        <svg viewBox="0 0 36 28" className="h-7 w-[35px] border-r border-white/40" fill="none">
          <path d="M28.500 16H12a6.800 6.800 0 0012.500 3.500" stroke="#59c3f2" strokeWidth="4.500" />
          <path d="M12 15a7 7 0 0114 0" stroke="#7ad2f7" strokeWidth="4.500" />
          <path d="M29 8c1-4-1-6-7-3S8 15 7.500 21s4 4 8 2" stroke="#f2c230" strokeWidth="2" />
        </svg>
        <span className="ml-[2px] h-full w-px bg-white/40" />
      </button>
      <button type="button" aria-label="File Explorer" className="relative ml-3 w-[26px]">
        <svg viewBox="0 0 26 24" className="h-6 w-[26px]">
          <path d="M2 3l7-1 2 2h9l3 3v14H2z" fill="#e9c968" />
          <path d="M4 4h5M14 5h5" stroke="#b5483c" strokeWidth="1.500" />
          <path d="M1 7h24v14H1z" fill="#f8e3a0" />
          <path d="M4 23v-6c0-2 1-3 3-3h12c2 0 3 1 3 3v6h-5v-5H9v5z" fill="#8cc6ea" stroke="#cfe8f7" />
        </svg>
      </button>
      <button type="button" aria-label="Excel" className="relative ml-3 flex h-[29px] w-[43px] items-center justify-center border border-white/80 bg-white/30">
        <ExcelMark className="h-[22px] w-6" />
      </button>
      <div className="relative ml-auto flex items-center">
        <svg viewBox="0 0 22 13" className="h-[13px] w-[22px]" fill="none" stroke="#fff" aria-hidden="true">
          <path d="M.5.5h21v12H.5z" strokeWidth="1.500" />
          <path d="M3 3.500h16M3 6.500h16" strokeWidth="2" strokeDasharray="2 1" />
          <path d="M3 9.500h2M6.500 9.500h9M17 9.500h2" strokeWidth="2" />
        </svg>
        <svg viewBox="0 0 5 3" className="ml-[11px] h-[3px] w-[5px]" aria-hidden="true"><path d="M0 3h5L2.500 0z" fill="#fff" /></svg>
        <svg viewBox="0 0 12 12" className="ml-[10px] size-3" fill="#fff" aria-hidden="true">
          <path d="M1 0h1.500v12H1zM3 1h4v2h5l-1.500 2.500L12 8H7V6H3z" />
        </svg>
        <svg viewBox="0 0 12 12" className="ml-[6px] size-3" fill="none" stroke="#fff" aria-hidden="true">
          <path d="M6.500 1.500h5v10h-5zM8 .5h2M0 3h5M1 1v3M4 1v3M2.500 4v5" />
          <path d="M8 4h2v6H8z" fill="#fff" />
        </svg>
        <svg viewBox="0 0 12 12" className="ml-[6px] size-3" fill="#fff" aria-hidden="true">
          <path d="M0 9h1.500v2H0zM2.500 7.500H4V11H2.500zM5 6h1.500v5H5zM7.500 3.500H9V11H7.500zM10 1h1.500v10H10z" />
        </svg>
        <svg viewBox="0 0 12 12" className="ml-[6px] size-3" fill="none" stroke="#fff" aria-hidden="true">
          <path d="M0 4h2l3-3v10L2 8H0z" fill="#fff" />
          <path d="M7 4c1 1 1 3 0 4M9 2.500c2 2 2 5 0 7" />
        </svg>
        <div className="ml-[7px] mr-[11px] w-[52px] text-center leading-[13px]">
          <div>1:56 PM</div>
          <div>10/6/2013</div>
        </div>
      </div>
    </div>
  )
}

export default function App() {
  return (
    <div className="flex h-screen flex-col overflow-hidden bg-white font-['Open_Sans',sans-serif] text-[9px] leading-3">
      <header className="relative shrink-0">
        <HeaderPattern />
        <TitleBar />
        <Tabs />
      </header>
      <Ribbon />
      <FormulaBar />
      <main className="flex min-h-0 flex-1">
        <div className="flex min-w-0 flex-1 flex-col">
          <div className="flex min-h-0 flex-1">
            <Sheet />
            <div className="flex w-4 shrink-0 flex-col items-center">
              <ScrollButton dir="up" />
              <div className="h-3 w-[11px] border border-t-0 border-[#ababab] bg-white" />
              <div className="w-[11px] flex-1 bg-[#f0f0f0]" />
              <ScrollButton dir="down" />
            </div>
          </div>
          <SheetTabs />
        </div>
        <FieldsPane />
      </main>
      <StatusBar />
      <Taskbar />
    </div>
  )
}
